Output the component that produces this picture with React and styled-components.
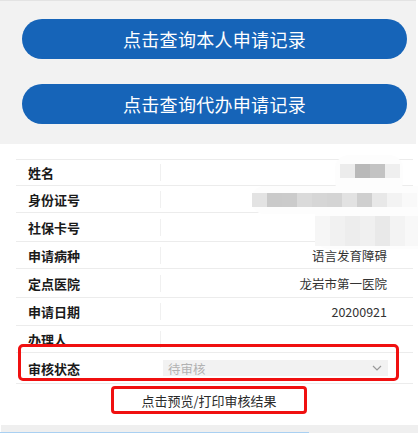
import React from "react";
import styled, { createGlobalStyle } from "styled-components";

const GlobalStyle = createGlobalStyle`
  html, body {
    margin: 0;
    padding: 0;
    background: #ffffff;
    font-family: "Noto Sans CJK SC", "Noto Sans", "Liberation Sans", sans-serif;
  }
`;

const Page = styled.div`
  position: relative;
  width: 418px;
  height: 433px;
  overflow: hidden;
  background: #fff;
`;

const QueryPanel = styled.div`
  height: 144px;
  width: 416px;
  border-top: 1px solid #e3e3e3;
  background: #f2f2f2;
  padding: 18px 0 0 22px;
  box-sizing: border-box;
  display: flex;
  flex-direction: column;
  gap: 25px;
`;

const QueryButton = styled.button`
  width: 385px;
  height: 40px;
  border: none;
  border-radius: 20px;
  background: #1664b8;
  color: #fff;
  font-family: inherit;
  font-size: 18px;
  letter-spacing: 0.3px;
  padding: 0;
`;

const InfoTable = styled.div`
  margin: 15px 5px 0 16px;
  border-top: 1px solid #ececec;
`;

const Row = styled.div`
  display: grid;
  grid-template-columns: 144px 1fr;
  align-items: center;
  height: ${(p) => p.$h || 27}px;
  border-bottom: 1px solid #ececec;
`;

const Label = styled.div`
  padding-left: 12px;
  font-size: 13px;
  font-weight: 700;
  color: #1a1a1a;
  line-height: 1;
`;

const Value = styled.div`
  height: 17px;
  border-left: 1px solid #f0f0f0;
  padding-right: 26px;
  display: flex;
  align-items: center;
  justify-content: flex-end;
  font-size: 12.5px;
  color: #333;
`;

const Select = styled.div`
  margin-left: 3px;
  margin-right: 25px;
  height: 16px;
  background: #f2f2f2;
  display: flex;
  align-items: center;
  justify-content: space-between;
  padding: 0 6px 0 5px;
  font-size: 12.5px;
  color: #b2b2b2;
`;

const PrintLink = styled.div`
  margin: 2px auto 0;
  width: 196px;
  height: 28px;
  box-sizing: border-box;
  border: 3px solid #f01010;
  border-radius: 4px;
  display: flex;
  align-items: center;
  justify-content: center;
  font-size: 13px;
  color: #2a2a2a;
`;

const Highlight = styled.div`
  position: absolute;
  left: 18px;
  top: 344px;
  width: 381px;
  height: 37px;
  box-sizing: border-box;
  border: 3px solid #f01010;
  border-radius: 5px;
`;

const Mosaic = styled.div`
  position: absolute;
  left: ${(p) => p.$x}px;
  top: ${(p) => p.$y}px;
  width: ${(p) => p.$w}px;
  height: ${(p) => p.$h}px;
  background: #fdfdfd;
  border-radius: ${(p) => p.$r || "14px"};
  display: flex;
  align-items: center;
  padding-left: ${(p) => p.$pad || 0}px;
  box-sizing: border-box;
`;

const Tile = styled.span`
  width: 15px;
  height: ${(p) => p.$h || 14}px;
  background: ${(p) => p.$c};
  flex: none;
`;

const BottomStrip = styled.div`
  position: absolute;
  left: 1px;
  right: 0;
  bottom: 0;
  height: 8px;
  background: #efefef;
  &::after {
    content: "";
    position: absolute;
    left: -1px;
    bottom: 0;
    width: 309px;
    height: 1px;
    background: #a9d0f2;
  }
`;

const Chevron = () => (
  <svg width="10" height="6" viewBox="0 0 10 6">
    <path d="M1 1l4 4 4-4" fill="none" stroke="#9a9a9a" strokeWidth="1.2" />
  </svg>
);

const rows = [
  { label: "姓名", value: "", h: 25 },
  { label: "身份证号", value: "", h: 26 },
  { label: "社保卡号", value: "", h: 28 },
  { label: "申请病种", value: "语言发育障碍", h: 26 },
  { label: "定点医院", value: "龙岩市第一医院", h: 28 },
  { label: "申请日期", value: "20200921", h: 27 },
  { label: "办理人", value: "", h: 26 },
];

const nameTiles = ["#ececec", "#b9b9b9", "#c3c3c3", "#efefef"];
const idTiles = ["#e3e3e3", "#cacaca", "#cbcbcb", "#dadada", "#d6d6d6", "#d4d4d4", "#e2e2e2", "#cfcfcf", "#e8e8e8", "#f3f3f3", "#f9f9f9"];
const cardTiles = ["#f6f6f6", "#f1f1f1", "#ededed", "#f0f0f0", "#e9e9e9", "#f3f3f3", "#f8f8f8"];

const App = () => {
  return (
    <Page>
      <GlobalStyle />
      <QueryPanel>
        <QueryButton>点击查询本人申请记录</QueryButton>
        <QueryButton>点击查询代办申请记录</QueryButton>
      </QueryPanel>

      <InfoTable>
        {rows.map((r) => (
          <Row key={r.label} $h={r.h}>
            <Label>{r.label}</Label>
            <Value>{r.value}</Value>
          </Row>
        ))}
        <Row $h={30}>
          <Label>审核状态</Label>
          <Select>
            <span>待审核</span>
            <Chevron />
          </Select>
        </Row>
      </InfoTable>

      <PrintLink>点击预览/打印审核结果</PrintLink>

      <Mosaic $x={335} $y={155} $w={68} $h={32} $pad={5} $r="14px 14px 4px 4px">
        {nameTiles.map((c, i) => (
          <Tile key={i} $c={c} />
        ))}
      </Mosaic>
      <Mosaic $x={252} $y={186} $w={166} $h={28} $r="12px 0 0 12px">
        {idTiles.map((c, i) => (
          <Tile key={i} $c={c} />
        ))}
      </Mosaic>
      <Mosaic $x={315} $y={213} $w={103} $h={36} $pad={0} $r="0 0 0 14px">
        {cardTiles.map((c, i) => (
          <Tile key={i} $c={c} $h={30} />
        ))}
      </Mosaic>

      <Highlight />
      <BottomStrip />
    </Page>
  );
};

export default App;
